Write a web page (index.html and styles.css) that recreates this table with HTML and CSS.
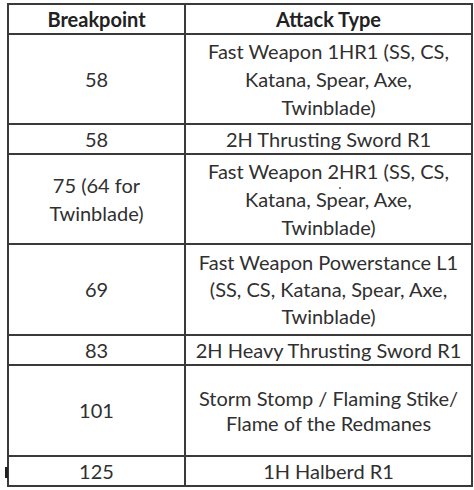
FILE: index.html
```html
<!DOCTYPE html>
<html>
<head>
<meta charset="utf-8">
<link rel="stylesheet" href="styles.css">
</head>
<body>
<div class="wrap">
<table class="bp">
  <colgroup><col class="c1"><col class="c2"></colgroup>
  <tr class="head"><th>Breakpoint</th><th>Attack Type</th></tr>
  <tr class="r3"><td>58</td><td>Fast Weapon 1HR1 (SS, CS,<br>Katana, Spear, Axe,<br>Twinblade)</td></tr>
  <tr class="r1"><td>58</td><td>2H Thrusting Sword R1</td></tr>
  <tr class="r3"><td>75 (64 for<br>Twinblade)</td><td>Fast Weapon 2HR1 (SS, CS,<br>Katana, Spear, Axe,<br>Twinblade)</td></tr>
  <tr class="r3b"><td>69</td><td>Fast Weapon Powerstance L1<br>(SS, CS, Katana, Spear, Axe,<br>Twinblade)</td></tr>
  <tr class="r1"><td>83</td><td>2H Heavy Thrusting Sword R1</td></tr>
  <tr class="r2"><td>101</td><td>Storm Stomp / Flaming Stike/<br>Flame of the Redmanes</td></tr>
  <tr class="r1"><td>125</td><td>1H Halberd R1</td></tr>
</table>
<span class="speck"></span>
<span class="mark"></span>
</div>
</body>
</html>
```
FILE: styles.css
```css
html, body { margin: 0; padding: 0; background: #fff; }
body { padding: 3px 0 0 7px; }
.wrap { position: relative; width: 464px; }
.bp {
  border-collapse: collapse;
  width: 464px;
  font-family: Lato, "Open Sans", sans-serif;
  font-size: 20px;
  color: #303030;
  table-layout: fixed;
}
.c1 { width: 177px; }
.c2 { width: 287px; }
.bp th, .bp td {
  border: 2px solid #3a3a3a;
  text-align: center;
  vertical-align: middle;
  padding: 0;
  line-height: 28px;
}
.bp th { font-weight: bold; color: #222; }
.head th { height: 28px; }
.r1 td { height: 28px; }
.r3 td { height: 88px; }
.r3b td { height: 89px; line-height: 27px; }
.r2 td { height: 89px; line-height: 25px; }
.speck {
  position: absolute; left: 332px; top: 184px;
  width: 2px; height: 2px; background: #555; border-radius: 1px;
}
.mark {
  position: absolute; left: -2px; top: 464px;
  width: 3px; height: 11px; background: #222;
}
```
